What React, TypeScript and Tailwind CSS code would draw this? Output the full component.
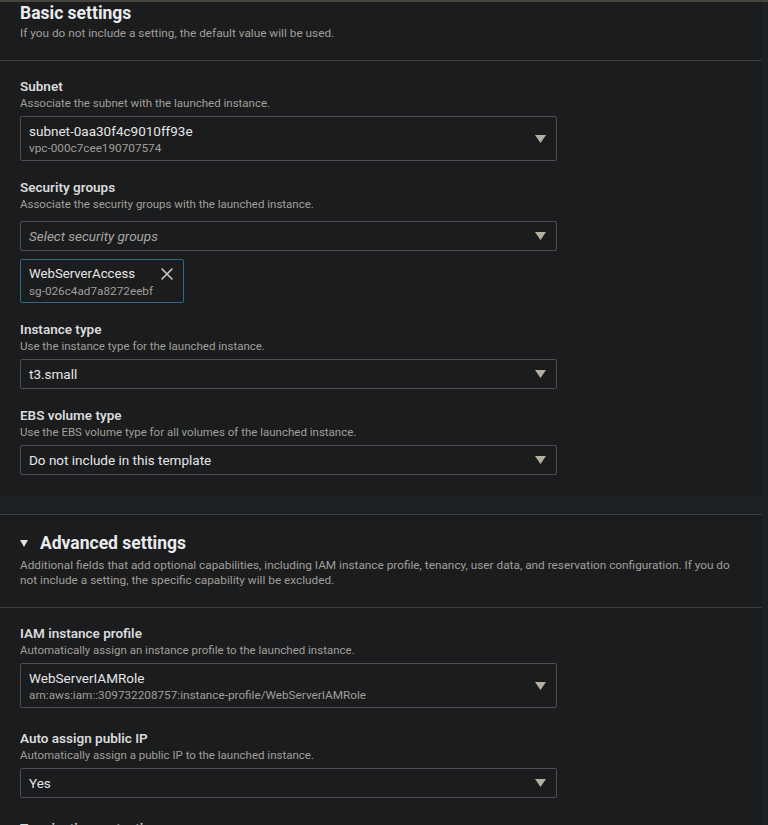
import React from "react";

interface FieldProps {
  label: string;
  description: string;
  gap?: string;
  children: React.ReactNode;
}

function Field({ label, description, gap = "mt-[4px]", children }: FieldProps) {
  return (
    <div className="flex flex-col">
      <span className="text-[13.5px] leading-[18px] font-semibold text-[#d9dadb]">
        {label}
      </span>
      <span className="text-[11.5px] leading-[17px] text-[#a19f99]">
        {description}
      </span>
      <div className={gap}>{children}</div>
    </div>
  );
}

function Caret() {
  return (
    <svg width="11" height="8" viewBox="0 0 11 8" className="shrink-0">
      <polygon points="0,0 11,0 5.5,8" fill="#b4b0a3" />
    </svg>
  );
}

interface SelectProps {
  value: string;
  secondary?: string;
  placeholder?: boolean;
}

function Select({ value, secondary, placeholder }: SelectProps) {
  return (
    <div
      className={`flex w-[537px] items-center justify-between rounded-[2px] border border-[#4c4e51] bg-[#1b1c1e] pl-2 pr-[10px] ${
        secondary ? "h-[45px]" : "h-[30px]"
      }`}
    >
      <div className="flex flex-col">
        <span
          className={`text-[13.5px] leading-[18px] ${
            placeholder ? "italic text-[#a8a7a2]" : "text-[#e6e6e6]"
          }`}
        >
          {value}
        </span>
        {secondary && (
          <span className="text-[11.75px] leading-[16px] text-[#a19f99]">
            {secondary}
          </span>
        )}
      </div>
      <Caret />
    </div>
  );
}

function Token({ name, id }: { name: string; id: string }) {
  return (
    <div className="mt-[8px] flex h-[44px] w-[164px] items-start justify-between rounded-[2px] border border-[#2a6c87] bg-[#1b1c1e] pl-2 pr-[9px] pt-[5px]">
      <div className="flex flex-col">
        <span className="text-[13.2px] leading-[18px] text-[#e6e6e6]">
          {name}
        </span>
        <span className="text-[11.75px] leading-[16px] text-[#a19f99]">
          {id}
        </span>
      </div>
      <svg width="14" height="14" viewBox="0 0 14 14" className="mt-[2px]">
        <path
          d="M2 2 L12 12 M12 2 L2 12"
          stroke="#c9c9c9"
          strokeWidth="1.6"
          strokeLinecap="round"
        />
      </svg>
    </div>
  );
}

export default function App() {
  return (
    <div
      className="h-[825px] overflow-hidden bg-[#1e2123]"
      style={{ fontFamily: "Roboto, 'Noto Sans', sans-serif" }}
    >
      <div className="h-[2px] bg-[#47433e]" />
      <div className="w-[762px]">
        <section className="bg-[#1b1c1e]">
          <div className="border-b border-[#3a3c3e] px-5 pb-[19px]">
            <h2 className="text-[17.5px] leading-[22px] font-bold text-[#e9ebed]">
              Basic settings
            </h2>
            <p className="mt-[1px] text-[11.8px] leading-[16px] text-[#a19f99]">
              If you do not include a setting, the default value will be used.
            </p>
          </div>
          <div className="flex flex-col gap-[17px] px-5 pt-[16px] pb-[21px]">
            <Field
              label="Subnet"
              description="Associate the subnet with the launched instance."
            >
              <Select
                value="subnet-0aa30f4c9010ff93e"
                secondary="vpc-000c7cee190707574"
              />
            </Field>
            <Field
              label="Security groups"
              description="Associate the security groups with the launched instance."
              gap="mt-[8px]"
            >
              <Select value="Select security groups" placeholder />
              <Token name="WebServerAccess" id="sg-026c4ad7a8272eebf" />
            </Field>
            <Field
              label="Instance type"
              description="Use the instance type for the launched instance."
            >
              <Select value="t3.small" />
            </Field>
            <Field
              label="EBS volume type"
              description="Use the EBS volume type for all volumes of the launched instance."
            >
              <Select value="Do not include in this template" />
            </Field>
          </div>
        </section>

        <div className="h-[18px]" />

        <section className="border-t border-[#3a3c3e] bg-[#1b1c1e]">
          <div className="border-b border-[#3a3c3e] px-5 pt-[17px] pb-[19px]">
            <div className="flex items-center gap-[12px]">
              <svg width="8" height="7" viewBox="0 0 8 7">
                <polygon points="0,0 8,0 4,7" fill="#e0e0e0" />
              </svg>
              <h2 className="text-[17.5px] leading-[22px] font-bold text-[#e9ebed]">
                Advanced settings
              </h2>
            </div>
            <p className="mt-[4px] w-[720px] text-[11.8px] leading-[15px] text-[#a19f99]">
              Additional fields that add optional capabilities, including IAM
              instance profile, tenancy, user data, and reservation
              configuration. If you do not include a setting, the specific
              capability will be excluded.
            </p>
          </div>
          <div className="flex flex-col gap-[21px] px-5 pt-[16px] pb-[21px]">
            <Field
              label="IAM instance profile"
              description="Automatically assign an instance profile to the launched instance."
            >
              <Select
                value="WebServerIAMRole"
                secondary="arn:aws:iam::309732208757:instance-profile/WebServerIAMRole"
              />
            </Field>
            <Field
              label="Auto assign public IP"
              description="Automatically assign a public IP to the launched instance."
            >
              <Select value="Yes" />
            </Field>
            <Field
              label="Termination protection"
              description="Prevent the launched instance from being accidentally terminated."
            >
              <Select value="Do not include in this template" />
            </Field>
          </div>
        </section>
      </div>
    </div>
  );
}
